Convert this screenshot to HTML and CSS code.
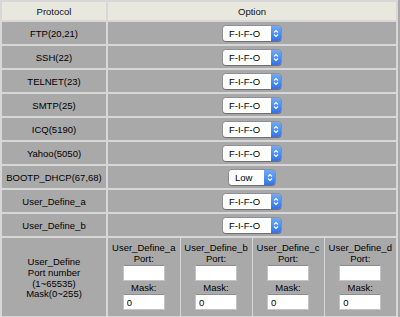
FILE: index.html
```html
<!DOCTYPE html>
<html lang="en">
<head>
  <meta charset="UTF-8" />
  <title>QoS Protocol Priority</title>
  <link rel="stylesheet" href="styles.css">
</head>
<body>

  <table class="proto_table">
    <tr>
      <th class="col_proto">Protocol</th>
      <th>Option</th>
    </tr>
    <tr>
      <td>FTP(20,21)</td>
      <td><span class="sel"><select><option>F-I-F-O</option></select><span class="spin"><svg width="6" height="9" viewBox="0 0 6 9"><path d="M1 3.5 L3 1.5 L5 3.5 M1 5.5 L3 7.5 L5 5.5" fill="none" stroke="#fff" stroke-width="1.1"/></svg></span></span></td>
    </tr>
    <tr>
      <td>SSH(22)</td>
      <td><span class="sel"><select><option>F-I-F-O</option></select><span class="spin"><svg width="6" height="9" viewBox="0 0 6 9"><path d="M1 3.5 L3 1.5 L5 3.5 M1 5.5 L3 7.5 L5 5.5" fill="none" stroke="#fff" stroke-width="1.1"/></svg></span></span></td>
    </tr>
    <tr>
      <td>TELNET(23)</td>
      <td><span class="sel"><select><option>F-I-F-O</option></select><span class="spin"><svg width="6" height="9" viewBox="0 0 6 9"><path d="M1 3.5 L3 1.5 L5 3.5 M1 5.5 L3 7.5 L5 5.5" fill="none" stroke="#fff" stroke-width="1.1"/></svg></span></span></td>
    </tr>
    <tr>
      <td>SMTP(25)</td>
      <td><span class="sel"><select><option>F-I-F-O</option></select><span class="spin"><svg width="6" height="9" viewBox="0 0 6 9"><path d="M1 3.5 L3 1.5 L5 3.5 M1 5.5 L3 7.5 L5 5.5" fill="none" stroke="#fff" stroke-width="1.1"/></svg></span></span></td>
    </tr>
    <tr>
      <td>ICQ(5190)</td>
      <td><span class="sel"><select><option>F-I-F-O</option></select><span class="spin"><svg width="6" height="9" viewBox="0 0 6 9"><path d="M1 3.5 L3 1.5 L5 3.5 M1 5.5 L3 7.5 L5 5.5" fill="none" stroke="#fff" stroke-width="1.1"/></svg></span></span></td>
    </tr>
    <tr>
      <td>Yahoo(5050)</td>
      <td><span class="sel"><select><option>F-I-F-O</option></select><span class="spin"><svg width="6" height="9" viewBox="0 0 6 9"><path d="M1 3.5 L3 1.5 L5 3.5 M1 5.5 L3 7.5 L5 5.5" fill="none" stroke="#fff" stroke-width="1.1"/></svg></span></span></td>
    </tr>
    <tr>
      <td>BOOTP_DHCP(67,68)</td>
      <td><span class="sel sel-low"><select><option>Low</option></select><span class="spin"><svg width="6" height="9" viewBox="0 0 6 9"><path d="M1 3.5 L3 1.5 L5 3.5 M1 5.5 L3 7.5 L5 5.5" fill="none" stroke="#fff" stroke-width="1.1"/></svg></span></span></td>
    </tr>
    <tr>
      <td>User_Define_a</td>
      <td><span class="sel"><select><option>F-I-F-O</option></select><span class="spin"><svg width="6" height="9" viewBox="0 0 6 9"><path d="M1 3.5 L3 1.5 L5 3.5 M1 5.5 L3 7.5 L5 5.5" fill="none" stroke="#fff" stroke-width="1.1"/></svg></span></span></td>
    </tr>
    <tr>
      <td>User_Define_b</td>
      <td><span class="sel"><select><option>F-I-F-O</option></select><span class="spin"><svg width="6" height="9" viewBox="0 0 6 9"><path d="M1 3.5 L3 1.5 L5 3.5 M1 5.5 L3 7.5 L5 5.5" fill="none" stroke="#fff" stroke-width="1.1"/></svg></span></span></td>
    </tr>
    <tr class="user_row">
      <td class="user_label">User_Define<br>Port number<br>(1~65535)<br>Mask(0~255)</td>
      <td class="user_cell">
        <table class="user_table">
          <tr>
            <td>
              <div class="ud_line">User_Define_a</div>
              <div class="ud_line">Port:</div>
              <input type="text" class="ud_input" value="">
              <div class="ud_line">Mask:</div>
              <input type="text" class="ud_input" value="0">
            </td>
            <td>
              <div class="ud_line">User_Define_b</div>
              <div class="ud_line">Port:</div>
              <input type="text" class="ud_input" value="">
              <div class="ud_line">Mask:</div>
              <input type="text" class="ud_input" value="0">
            </td>
            <td>
              <div class="ud_line">User_Define_c</div>
              <div class="ud_line">Port:</div>
              <input type="text" class="ud_input" value="">
              <div class="ud_line">Mask:</div>
              <input type="text" class="ud_input" value="0">
            </td>
            <td>
              <div class="ud_line">User_Define_d</div>
              <div class="ud_line">Port:</div>
              <input type="text" class="ud_input" value="">
              <div class="ud_line">Mask:</div>
              <input type="text" class="ud_input" value="0">
            </td>
          </tr>
        </table>
      </td>
    </tr>
  </table>

</body>
</html>
```

FILE: styles.css
```css
body {
  margin: 0;
  padding: 0;
  background-color: #a9a9a9;
  font-family: "Liberation Sans", Arial, sans-serif;
  font-size: 9.5px;
  color: #000;
}

.proto_table {
  width: 398px;
  border-spacing: 2px;
  background-color: #d7d7d7;
}

.proto_table th {
  height: 18px;
  padding: 0;
  background-color: #e8e8df;
  font-weight: normal;
  color: #111;
}

.proto_table td {
  height: 22px;
  padding: 0;
  background-color: #a9a9a9;
  text-align: center;
}

.col_proto {
  width: 104px;
}

.sel {
  display: inline-flex;
  vertical-align: middle;
  height: 15px;
  border-radius: 3px;
  box-shadow: 0 0 0 0.5px rgba(0,0,0,0.3), 0 1px 1px rgba(0,0,0,0.25);
}

.sel select {
  -webkit-appearance: none;
  appearance: none;
  width: 48px;
  height: 15px;
  margin: 0;
  padding: 0 0 0 6px;
  border: none;
  border-radius: 3px 0 0 3px;
  background-color: #fff;
  font: inherit;
  color: #000;
  outline: none;
}

.sel-low select {
  width: 35px;
}

.spin {
  width: 10px;
  display: flex;
  align-items: center;
  justify-content: center;
  border-radius: 0 3px 3px 0;
  background: linear-gradient(#6eaaf8, #2f75ec);
}

.sel-low .spin {
  width: 11px;
}

.user_row .user_label {
  height: 74px;
  line-height: 10.6px;
  padding-top: 3px;
}

.user_row .user_cell {
  vertical-align: top;
}

.user_table {
  width: 100%;
  height: 74px;
  border-collapse: collapse;
}

.user_table td {
  width: 25%;
  height: 74px;
  padding: 4px 0 0 0;
  vertical-align: top;
  border-left: 1px solid #d7d7d7;
}

.user_table td:first-child {
  border-left: none;
}

.ud_line {
  height: 11px;
  line-height: 11px;
}

.ud_input {
  display: block;
  box-sizing: border-box;
  width: 42px;
  height: 16px;
  margin: 1px auto;
  padding: 0 3px;
  border: 1px solid #c4c4c4;
  border-top-color: #8f8f8f;
  background-color: #fff;
  font: inherit;
  color: #000;
}
```
